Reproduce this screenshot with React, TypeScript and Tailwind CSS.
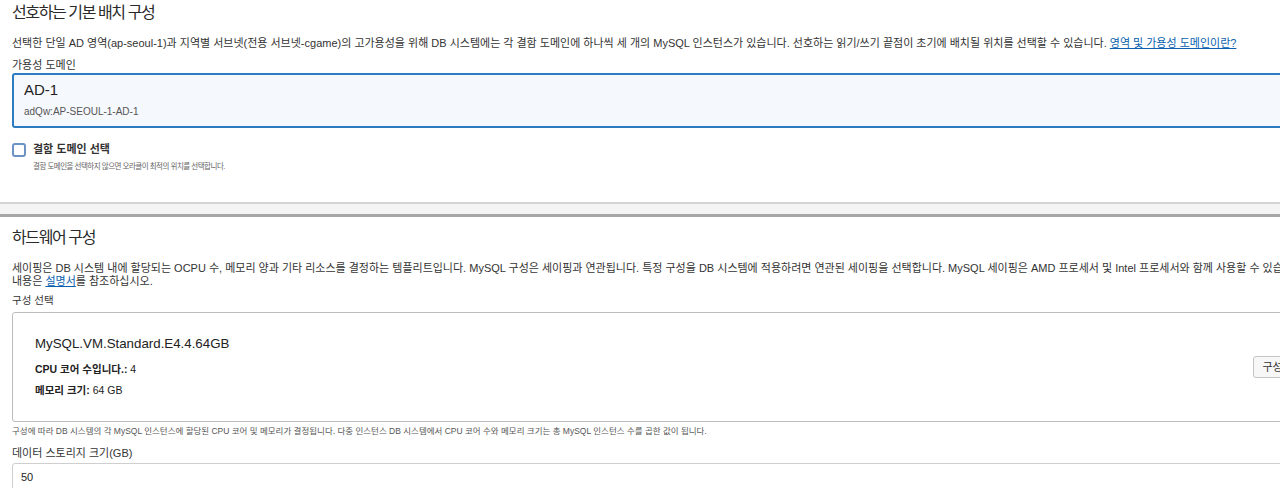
import React from 'react'

const font = { fontFamily: '"Liberation Sans", "Noto Sans CJK KR", sans-serif' }

function Separator() {
	return (
		<div className="mt-[30px]">
			<div className="h-[2px] bg-[#d4d4d4]" />
			<div className="h-[10px] bg-[#f4f4f4]" />
			<div className="h-[3px] bg-[#a6a6a6]" />
		</div>
	)
}

export default function App() {
	return (
		<div className="w-[1280px] h-[488px] overflow-hidden bg-white text-[#161513]" style={font}>
			<div className="w-[1365px]">
				{/* 선호하는 기본 배치 */}
				<section className="pl-[12px] pt-[3px]">
					<h2 className="text-[16px] leading-[20px] tracking-[-1.4px] text-[#2a2a2a]">선호하는 기본 배치 구성</h2>
					<p className="mt-[13px] text-[11px] leading-[14px] break-keep text-[#333]">
						선택한 단일 AD 영역(ap-seoul-1)과 지역별 서브넷(전용 서브넷-cgame)의 고가용성을 위해 DB 시스템에는 각 결함 도메인에 하나씩 세 개의 MySQL 인스턴스가 있습니다. 선호하는 읽기/쓰기 끝점이 초기에 배치될 위치를 선택할 수 있습니다.{' '}
						<a className="text-[#0a5fae] underline">영역 및 가용성 도메인이란?</a>
					</p>
					<div className="mt-[8px] text-[11px] leading-[14px] text-[#333]">가용성 도메인</div>
					<div className="mt-[1px] h-[55px] border-2 border-[#2d7bc0] rounded-[3px] bg-[#f5f8fd] px-[10px] pt-[5px]">
						<div className="text-[15px] leading-[20px] text-[#222]">AD-1</div>
						<div className="mt-[6px] text-[10px] leading-[12px] text-[#555]">adQw:AP-SEOUL-1-AD-1</div>
					</div>
					<label className="mt-[15px] flex items-start gap-[7px]">
						<span className="w-[14px] h-[14px] border-2 border-[#6b93c4] rounded-[3px] bg-white shrink-0" />
						<span className="flex flex-col">
							<span className="text-[11px] leading-[13px] font-bold text-[#333]">결함 도메인 선택</span>
							<span className="mt-[5px] text-[7.5px] leading-[11px] tracking-[-0.5px] text-[#666]">결함 도메인을 선택하지 않으면 오라클이 최적의 위치를 선택합니다.</span>
						</span>
					</label>
				</section>

				<Separator />

				{/* 하드웨어 구성 */}
				<section className="pl-[12px] pt-[11px]">
					<h2 className="text-[16px] leading-[20px] tracking-[-1.4px] text-[#2a2a2a]">하드웨어 구성</h2>
					<p className="mt-[14px] text-[11px] leading-[13px] break-keep text-[#333]">
						세이핑은 DB 시스템 내에 할당되는 OCPU 수, 메모리 양과 기타 리소스를 결정하는 템플리트입니다. MySQL 구성은 세이핑과 연관됩니다. 특정 구성을 DB 시스템에 적용하려면 연관된 세이핑을 선택합니다. MySQL 세이핑은 AMD 프로세서 및 Intel 프로세서와 함께 사용할 수 있습니다. 자세한 내용은{' '}
						<a className="text-[#0a5fae] underline">설명서</a>를 참조하십시오.
					</p>
					<div className="mt-[5px] text-[10.5px] leading-[14px] text-[#333]">구성 선택</div>
					<div className="mt-[5px] h-[110px] border border-[#bdbdbd] rounded-[3px] bg-white flex items-center pl-[22px] pr-[49px]">
						<div className="flex-1 self-start pt-[22px]">
							<div className="text-[13.3px] leading-[18px] text-[#222]">MySQL.VM.Standard.E4.4.64GB</div>
							<div className="mt-[10px] text-[10.5px] leading-[13px] text-[#222]">
								<span className="font-bold">CPU 코어 수입니다.:</span> 4
							</div>
							<div className="mt-[8px] text-[10.5px] leading-[13px] text-[#222]">
								<span className="font-bold">메모리 크기:</span> 64 GB
							</div>
						</div>
						<button className="h-[22px] px-[8px] border border-[#c4c4c4] rounded-[3px] bg-[#f7f7f7] text-[11px] text-[#333]">구성 변경</button>
					</div>
					<div className="mt-[4px] text-[8.5px] leading-[11px] text-[#555]">
						구성에 따라 DB 시스템의 각 MySQL 인스턴스에 할당된 CPU 코어 및 메모리가 결정됩니다. 다중 인스턴스 DB 시스템에서 CPU 코어 수와 메모리 크기는 총 MySQL 인스턴스 수를 곱한 값이 됩니다.
					</div>
					<div className="mt-[9px] text-[11px] leading-[14px] text-[#333]">데이터 스토리지 크기(GB)</div>
					<div className="mt-[3px] h-[28px] border border-[#cfcfcf] rounded-[3px] bg-white px-[8px] flex items-center text-[11px] text-[#222]">50</div>
				</section>
			</div>
		</div>
	)
}
